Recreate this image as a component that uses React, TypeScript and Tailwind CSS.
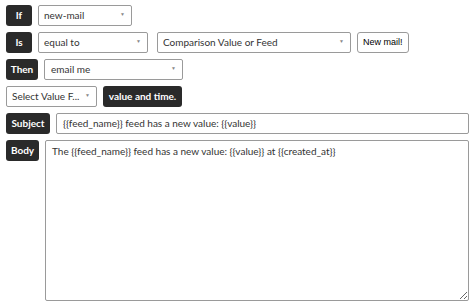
import React from "react";

const Label = ({ text, className = "" }: { text: string; className?: string }) => (
  <div
    className={`flex h-[21px] shrink-0 items-center justify-center whitespace-nowrap rounded-[3px] bg-[#2a2a2a] text-[10px] font-bold text-white ${className}`}
  >
    {text}
  </div>
);

const Select = ({ value, className = "" }: { value: string; className?: string }) => (
  <div
    className={`relative flex h-[21px] shrink-0 items-center rounded-[2px] border border-[#9a9a9a] bg-white pl-[5px] text-[10px] text-[#333] ${className}`}
  >
    <span className="truncate pr-4">{value}</span>
    <span className="absolute right-[6px] top-[5px] text-[5px] text-[#888]">▼</span>
  </div>
);

export default function App() {
  return (
    <div
      className="flex h-[305px] w-[474px] flex-col gap-[6px] bg-white pl-[6px] pr-[5px] pt-[5px]"
      style={{ fontFamily: "Lato, 'Open Sans', sans-serif" }}
    >
      <div className="flex gap-[6px]">
        <Label text="If" className="w-[26px]" />
        <Select value="new-mail" className="w-[94px]" />
      </div>
      <div className="flex gap-[6px]">
        <Label text="Is" className="w-[26px]" />
        <Select value="equal to" className="w-[110px]" />
        <Select value="Comparison Value or Feed" className="ml-[3px] w-[194px]" />
        <button
          className="h-[21px] rounded-[3px] border border-[#9a9a9a] bg-white px-[5px] text-[9px] text-black"
          style={{ fontFamily: "'Liberation Sans', Arial, sans-serif" }}
        >
          New mail!
        </button>
      </div>
      <div className="flex gap-[6px]">
        <Label text="Then" className="w-[32px]" />
        <Select value="email me" className="w-[139px] pl-[6px]" />
      </div>
      <div className="flex gap-[6px]">
        <Select value="Select Value F..." className="w-[91px]" />
        <Label text="value and time." className="w-[79px]" />
      </div>
      <div className="flex gap-[6px]">
        <Label text="Subject" className="w-[44px]" />
        <div className="flex h-[21px] flex-1 items-center rounded-[2px] border border-[#9a9a9a] bg-white pl-[6px] text-[10px] text-[#333]">
          {"{{feed_name}} feed has a new value: {{value}}"}
        </div>
      </div>
      <div className="flex gap-[6px]">
        <Label text="Body" className="w-[33px]" />
        <textarea
          className="h-[161px] flex-1 rounded-[2px] border border-[#9a9a9a] bg-white px-[6px] pt-[3px] text-[10px] text-[#333] outline-none"
          defaultValue="The {{feed_name}} feed has a new value: {{value}} at {{created_at}}"
          style={{ fontFamily: "Lato, 'Open Sans', sans-serif" }}
        />
      </div>
    </div>
  );
}
